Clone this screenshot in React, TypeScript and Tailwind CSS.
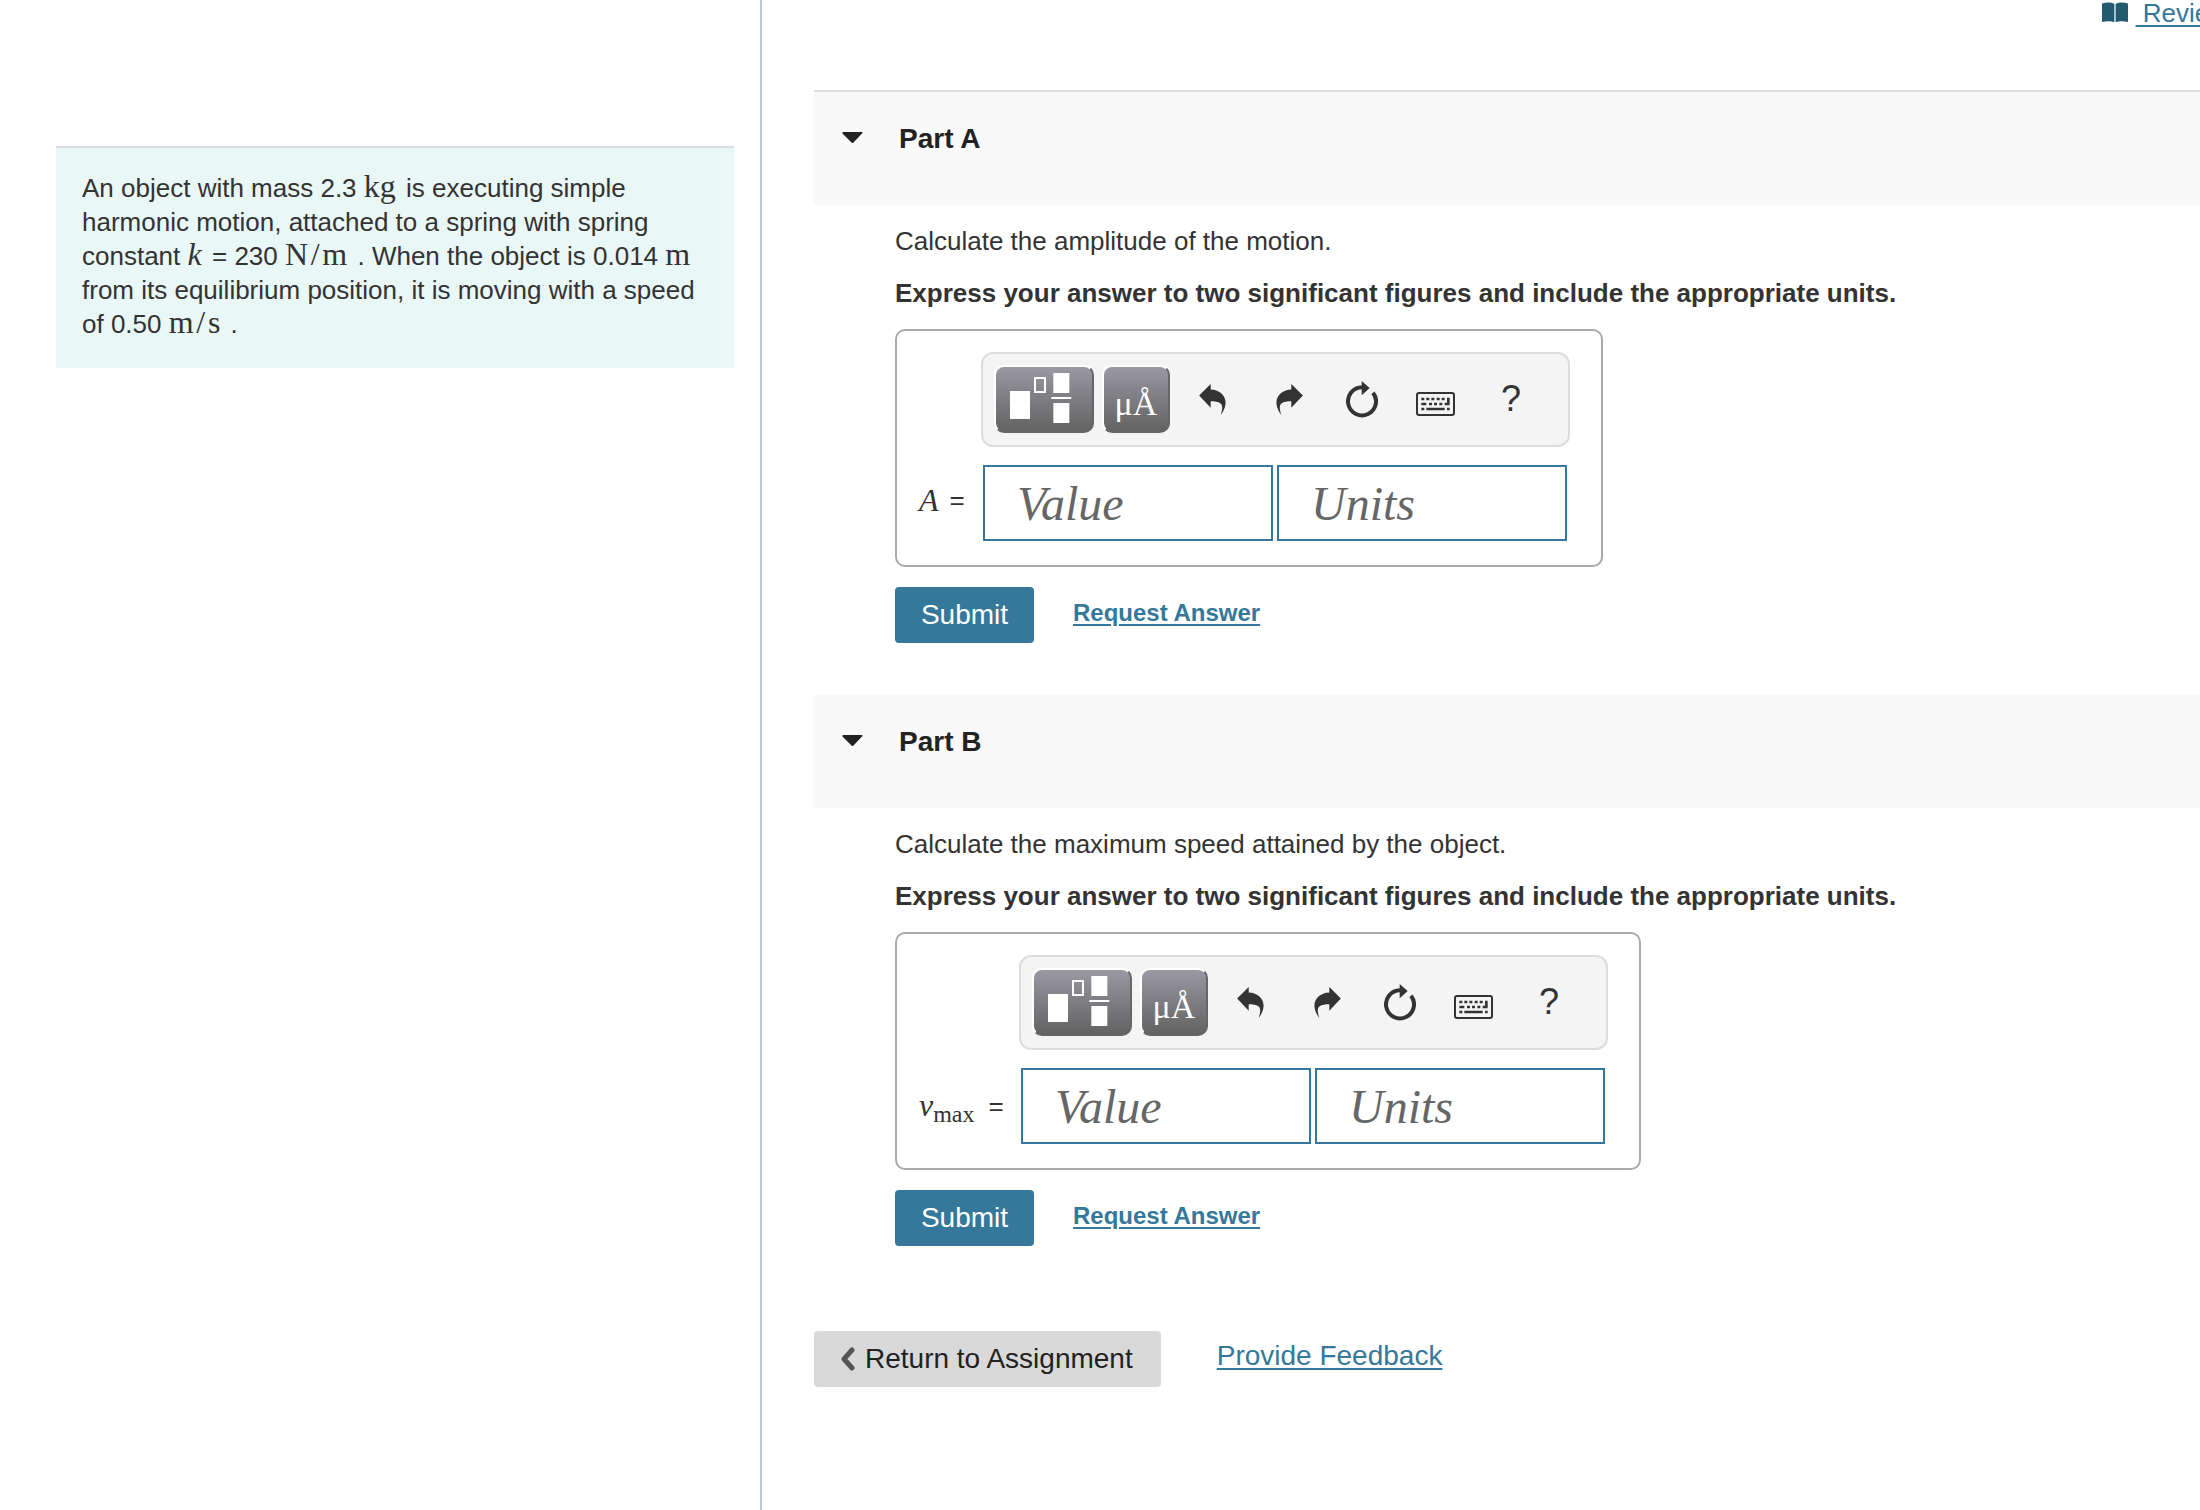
import type { ReactNode } from "react";

interface Part {
  id: string;
  title: string;
  question: string;
  symbol: ReactNode;
  labelStyle: string;
  headerBorder: string;
}

const parts: Part[] = [
  {
    id: "a",
    title: "Part A",
    question: "Calculate the amplitude of the motion.",
    symbol: <i className="mr-[11px] font-['Liberation_Serif',serif] text-[32px]">A</i>,
    labelStyle: "w-[84px] pb-[6px]",
    headerBorder: "border-t-2 border-[#dddddd]",
  },
  {
    id: "b",
    title: "Part B",
    question: "Calculate the maximum speed attained by the object.",
    symbol: (
      <span className="mr-[14px] font-['Liberation_Serif',serif]">
        <i className="text-[32px]">v</i>
        <sub className="text-[24px]">max</sub>
      </span>
    ),
    labelStyle: "w-[122px]",
    headerBorder: "",
  },
];

const MathText = ({ children }: { children: ReactNode }) => (
  <span className="mr-[3px] font-['Liberation_Serif',serif] text-[32px] leading-[0px]">
    {children}
  </span>
);

const BookIcon = () => (
  <svg className="mt-[2px] h-[21px] w-[26px]" viewBox="0 0 26 21" fill="#245a70">
    <path d="M0 1.5C4 0 9 0 12 1.5V20C9 19 4 19 0 20Z" />
    <path d="M14 1.5C17 0 22 0 26 1.5V20C22 19 17 19 14 20Z" />
    <path d="M12 2h2v18h-2z" fill="#a9c0ca" />
  </svg>
);

const TemplateIcon = () => (
  <svg className="h-[50px] w-[62px]" viewBox="0 0 186 150" fill="#fff">
    <rect x="0" y="54" width="60" height="84" />
    <rect x="75" y="15" width="30" height="42" fill="none" stroke="#fff" strokeWidth="6" />
    <rect x="130" y="0" width="48" height="60" />
    <rect x="124" y="72" width="60" height="6" />
    <rect x="130" y="90" width="48" height="60" />
  </svg>
);

const arrowPath =
  "M0 35L35 0V17C64 18 82 38 80 60C79 74 72 86 65 94C70 80 73 66 65 59C58 53 47 52 35 52V72Z";

const UndoIcon = () => (
  <svg className="h-[31px] w-[27px]" viewBox="0 0 81 94" fill="#333">
    <path d={arrowPath} />
  </svg>
);

const RedoIcon = () => (
  <svg className="h-[31px] w-[27px]" viewBox="0 0 81 94" fill="#333">
    <path d={arrowPath} transform="translate(81 0) scale(-1 1)" />
  </svg>
);

const ResetIcon = () => (
  <svg className="h-[37px] w-8" viewBox="0 0 96 111">
    <path d="M48 19A42 42 0 1 0 81 35" fill="none" stroke="#333" strokeWidth="12" />
    <path d="M47 0L71 21L47 43Z" fill="#333" />
  </svg>
);

const KeyboardIcon = () => (
  <svg className="mt-[10px] h-6 w-[39px]" viewBox="0 0 117 72" fill="#333">
    <rect x="3" y="3" width="111" height="66" rx="6" fill="none" stroke="#333" strokeWidth="6" />
    <path d="M16 17h9v8h-9zM31 17h9v8h-9zM46 17h9v8h-9zM62 17h9v8h-9zM77 17h9v8h-9zM93 17h8v23h-15v-8h7z" />
    <path d="M16 32h15v8H16zM39 32h9v8h-9zM54 32h9v8h-9zM70 32h9v8h-9z" />
    <path d="M16 47h9v8h-9zM31 47h55v8H31zM93 47h8v8h-8z" />
  </svg>
);

const tools = [
  { name: "Undo", icon: <UndoIcon />, width: "w-[77px]" },
  { name: "Redo", icon: <RedoIcon />, width: "w-[76px]" },
  { name: "Reset", icon: <ResetIcon />, width: "w-[70px]" },
  { name: "Keyboard", icon: <KeyboardIcon />, width: "w-[77px]" },
  { name: "Help", icon: <span className="text-[36px] leading-none">?</span>, width: "w-[74px]" },
];

const darkButton =
  "flex h-[68px] items-center justify-center rounded-[10px] border-2 border-t-white border-r-[#666] border-b-[#666] border-l-white bg-linear-to-b from-[#9a98a2] to-[#636363] text-white";

const Toolbar = () => (
  <div className="flex items-center rounded-xl border-2 border-[#dddddd] bg-[#f4f4f4] pt-[11px] pr-5 pb-3 pl-[11px]">
    <button
      type="button"
      aria-label="Templates"
      className={`${darkButton} mr-2 w-[100px] pr-[6px] pb-[2px]`}
    >
      <TemplateIcon />
    </button>
    <button
      type="button"
      aria-label="Symbols"
      className={`${darkButton} mr-1 w-[68px] pt-[10px] font-['Liberation_Serif',serif] text-[34px]`}
    >
      μÅ
    </button>
    {tools.map((tool) => (
      <button
        key={tool.name}
        type="button"
        aria-label={tool.name}
        className={`flex h-[68px] items-center justify-center ${tool.width}`}
      >
        {tool.icon}
      </button>
    ))}
  </div>
);

const inputStyle =
  "h-[76px] w-[290px] border-2 border-[#367899] bg-white px-8 font-['Liberation_Serif',serif] text-[48px] italic placeholder:text-[#666] placeholder:opacity-100";

const PartSection = ({ part }: { part: Part }) => (
  <section>
    <div className={`flex bg-[#f9f9f9] pt-[31px] pb-[50px] pl-7 ${part.headerBorder}`}>
      <svg className="mt-[9px] mr-9 h-[11px] w-[21px]" viewBox="0 0 21 11" fill="#222">
        <path d="M1 0H20Q21 .5 20 1.5L11.5 10.5Q10.5 11.5 9.5 10.5L.5 1.5Q0 .5 1 0Z" />
      </svg>
      <h2 className="text-[28px] leading-8 font-bold text-[#222]">{part.title}</h2>
    </div>
    <div className="pt-5 pl-[81px] text-[26px] leading-8">
      <p>{part.question}</p>
      <p className="mt-5 font-bold">
        Express your answer to two significant figures and include the appropriate units.
      </p>
      <div className="mt-5 grid w-fit grid-cols-[auto_auto] gap-y-[18px] rounded-[10px] border-2 border-[#aaa] pt-[21px] pr-[31px] pb-6">
        <div className="col-start-2">
          <Toolbar />
        </div>
        <label
          htmlFor={`value-${part.id}`}
          className={`flex items-center pl-[22px] ${part.labelStyle}`}
        >
          {part.symbol}=
        </label>
        <div className="flex gap-1 pl-[2px]">
          <input id={`value-${part.id}`} type="text" placeholder="Value" className={inputStyle} />
          <input type="text" aria-label="Units" placeholder="Units" className={inputStyle} />
        </div>
      </div>
      <div className="mt-5 flex items-center gap-[39px]">
        <button
          type="button"
          className="h-14 w-[139px] rounded bg-[#367899] text-[28px] text-white"
        >
          Submit
        </button>
        <a
          href="#"
          className="pb-1 text-[24px] font-bold text-[#367899] underline decoration-2 underline-offset-3"
        >
          Request Answer
        </a>
      </div>
    </div>
  </section>
);

const App = () => {
  return (
    <div className="flex min-h-screen overflow-hidden bg-white font-['Liberation_Sans',Arial,sans-serif] text-[#333]">
      <aside className="w-[762px] shrink-0 border-r-2 border-[#bcc8d8] pt-[146px] pr-[26px] pl-14">
        <div className="border-t-2 border-[#dddddd] bg-[#e9f7f6] px-[26px] pt-[23px] pb-[27px]">
          <p className="text-[26px] leading-[34px]">
            An object with mass 2.3 <MathText>kg</MathText> is executing simple harmonic motion,
            attached to a spring with spring constant{" "}
            <MathText>
              <i>k</i>
            </MathText>{" "}
            = 230 <MathText>N&#8202;/&#8202;m</MathText> . When the object is 0.014{" "}
            <MathText>m</MathText> from its equilibrium position, it is moving with a speed of 0.50{" "}
            <MathText>m&#8202;/&#8202;s</MathText> .
          </p>
        </div>
      </aside>

      <main className="min-w-0 flex-1 pl-[52px]">
        <div className="-mr-7 flex h-[90px] items-start justify-end gap-2">
          <BookIcon />
          <a
            href="#"
            className="text-[26px] leading-[26px] text-[#367899] underline decoration-2 underline-offset-3"
          >
            &nbsp;Review
          </a>
        </div>
        <div className="flex flex-col gap-[52px]">
          {parts.map((part) => (
            <PartSection key={part.id} part={part} />
          ))}
        </div>
        <div className="mt-[85px] flex items-center gap-14 text-[28px]">
          <button
            type="button"
            className="flex h-14 items-center gap-[10px] rounded bg-[#d9d9d9] pr-7 pl-[26px] text-[#222]"
          >
            <svg className="h-6 w-[15px]" viewBox="0 0 15 24" fill="none" stroke="#555" strokeWidth="5">
              <path d="M12 3L4 12L12 21" strokeLinecap="round" strokeLinejoin="round" />
            </svg>
            Return to Assignment
          </button>
          <a
            href="#"
            className="pb-[6px] text-[#367899] underline decoration-2 underline-offset-3"
          >
            Provide Feedback
          </a>
        </div>
      </main>
    </div>
  );
};

export default App;
